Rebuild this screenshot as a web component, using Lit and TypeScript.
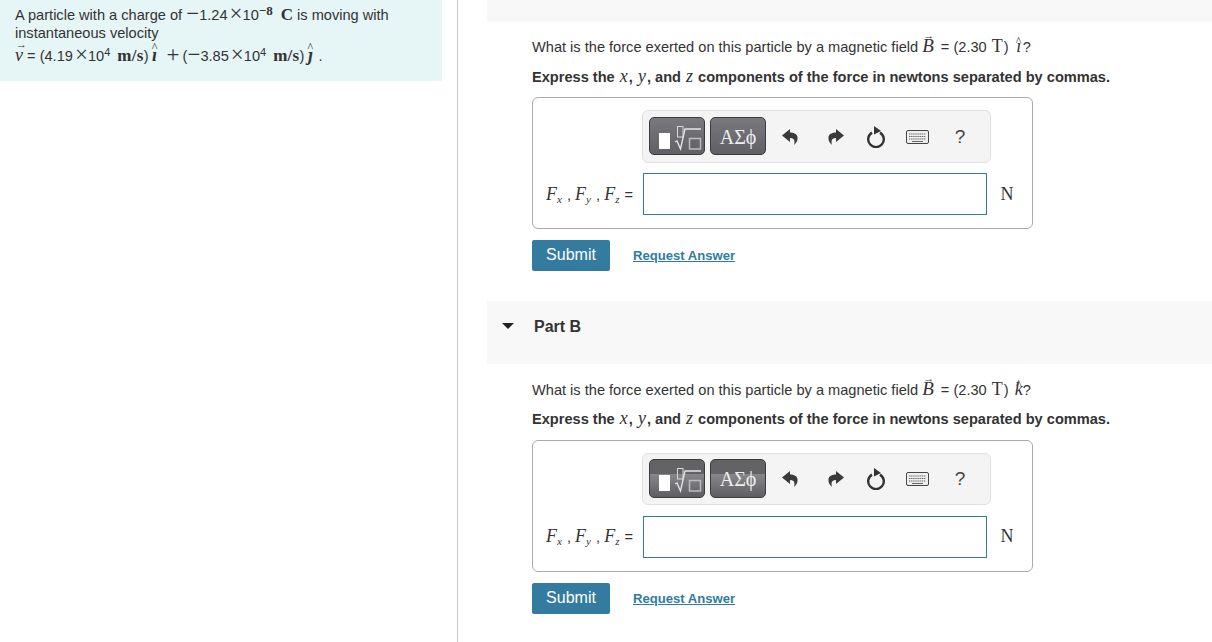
import { LitElement, html, css, nothing } from 'lit';
import { customElement, property } from 'lit/decorators.js';

const mathStyles = css`
    .m{
        font-family: "Liberation Serif", "Times New Roman", serif;
        font-size: 18px;
    }
    .op{
        font-family: "Liberation Serif", "Times New Roman", serif;
        font-size: 23px;
        line-height: 0;
        vertical-align: -1px;
    }
    .times{
        margin-left: 2px;
    }
    .i{
        font-family: "Liberation Serif", "Times New Roman", serif;
        font-style: italic;
        font-size: 18px;
    }
    .hat, .vec{
        position: relative;
        display: inline-block;
    }
    .hat{
        min-width: 8px;
        margin-left: 2px;
        text-align: center;
    }
    .hat::before{
        content: "^";
        position: absolute;
        left: 0;
        right: 0;
        top: -8px;
        text-align: center;
        font-style: normal;
        font-weight: normal;
        font-size: 12px;
    }
    .vec::before{
        content: "\\2192";
        position: absolute;
        left: 1px;
        right: 0;
        top: -11px;
        text-align: center;
        font-style: normal;
        font-size: 11px;
    }
    sub{
        font-size: 11px;
        line-height: 0;
        vertical-align: -3px;
    }
    sup{
        font-size: 11px;
        line-height: 0;
        vertical-align: 5px;
    }
`;

@customElement('answer-toolbar')
export class AnswerToolbar extends LitElement {
    @property({ type: Boolean }) banded = false;

    static styles = css`
        :host{
            display: flex;
            align-items: center;
            box-sizing: border-box;
            width: 349px;
            height: 53px;
            padding: 0 0 1px 6px;
            background: #f4f4f4;
            border: 1px solid #e0e0e0;
            border-radius: 6px;
        }
        :host([banded]){
            height: 52px;
            padding-bottom: 2px;
        }
        .btn{
            display: flex;
            align-items: center;
            justify-content: center;
            box-sizing: border-box;
            width: 56px;
            height: 38px;
            border: 1px solid #3c3c3c;
            border-radius: 5px;
            background: linear-gradient(#79797e, #606064);
            color: #eeeeee;
            font-family: "Liberation Serif", serif;
            font-size: 20px;
            padding: 2px 0 0;
        }
        .btn.math{
            padding: 0;
        }
        .btn + .btn{
            margin-left: 5px;
        }
        :host([banded]) .btn{
            height: 39px;
            background: linear-gradient(#636366 0, #636366 38%, #87878b 39%, #5e5e62 100%);
        }
        .tools{
            display: grid;
            grid-template-columns: 48px 44px 36px 46px 40px;
            justify-items: center;
            align-items: center;
            margin-top: 2px;
        }
        .help{
            font-family: "Liberation Sans", Arial, sans-serif;
            font-size: 19px;
            color: #444444;
        }
        svg{
            display: block;
        }
    `;

    render() {
        return html`
            <button class="btn math">
                <svg width="50" height="30" viewBox="0 0 50 30">
                    <rect x="7" y="12" width="11" height="16" fill="#ffffff"></rect>
                    <rect x="25.5" y="5.5" width="5.5" height="10.5" fill="none" stroke="#d8d8d8"></rect>
                    <path d="M23 21l2-1 3.5 8L33 8h16" fill="none" stroke="#e6e6e6" stroke-width="1.3"></path>
                    <rect x="37.5" y="17.5" width="11" height="10.5" fill="none" stroke="#bdbdbd" stroke-width="1.5"></rect>
                </svg>
            </button>
            <button class="btn">ΑΣϕ</button>
            <div class="tools">
                <svg width="16" height="17" viewBox="0 0 16 17">
                    <path d="M8 0L0 6.5 8 13V9c3 0 4.5 1.5 4.5 3.5 0 1.5-.2 2.5-.5 3.5 2.5-2 4-5 3.5-8C15 5 12 3.5 8 3.5z" fill="#3a3a3a"></path>
                </svg>
                <svg width="18" height="17" viewBox="0 0 16 17" style="transform: scaleX(-1)">
                    <path d="M8 0L0 6.5 8 13V9c3 0 4.5 1.5 4.5 3.5 0 1.5-.2 2.5-.5 3.5 2.5-2 4-5 3.5-8C15 5 12 3.5 8 3.5z" fill="#3a3a3a"></path>
                </svg>
                <svg width="20" height="22" viewBox="0 0 20 22">
                    <path d="M6 6.6a7.8 7.8 0 1 0 8 0" fill="none" stroke="#333333" stroke-width="2.4"></path>
                    <path d="M8 0l7 5-7 3.5z" fill="#333333"></path>
                </svg>
                <svg width="23" height="14" viewBox="0 0 23 14">
                    <rect x="0.5" y="0.5" width="22" height="13" rx="1.5" fill="#eeeeee" stroke="#444444"></rect>
                    <path d="M3 4h17M3 6.5h17M3 9h17" stroke="#666666" stroke-dasharray="1.4 .7" fill="none"></path>
                    <path d="M6 11.5h11" stroke="#666666" fill="none"></path>
                </svg>
                <span class="help">?</span>
            </div>
        `;
    }
}

@customElement('question-part')
export class QuestionPart extends LitElement {
    @property() title = '';
    @property() unit = 'ı';
    @property({ type: Boolean }) banded = false;

    static styles = [mathStyles, css`
        :host{
            display: block;
        }
        .band{
            display: flex;
            align-items: flex-start;
            box-sizing: border-box;
            height: 22px;
            background: #f8f8f8;
        }
        .band.titled{
            height: 63px;
            padding: 16px 0 0 15px;
        }
        .arrow{
            width: 0;
            height: 0;
            margin: 6px 20px 0 0;
            border-left: 6px solid transparent;
            border-right: 6px solid transparent;
            border-top: 6px solid #222222;
        }
        h2{
            margin: 0;
            font-size: 16px;
            line-height: 19px;
            font-weight: bold;
            color: #333333;
        }
        .body{
            padding-left: 45px;
        }
        p{
            margin: 0;
            height: 20px;
            color: #333333;
            font-size: 14.6px;
            line-height: 20px;
            white-space: nowrap;
        }
        .question{
            padding-top: 14px;
        }
        .question .hat::before{
            top: -5px;
        }
        .question .vec{
            margin-right: 3px;
        }
        .question .m{
            margin: 0 1px;
        }
        .express{
            padding-top: 10px;
            font-weight: bold;
        }
        .express .i{
            margin: 0 1px;
            font-weight: normal;
        }
        .banded .question{
            padding-top: 15px;
        }
        .banded .express{
            padding-top: 9px;
        }
        .box{
            display: grid;
            grid-template-columns: 110px 344px 1fr;
            box-sizing: border-box;
            width: 501px;
            height: 132px;
            margin-top: 11px;
            padding-top: 12px;
            border: 1px solid #aaaaaa;
            border-radius: 6px;
            align-content: start;
        }
        .banded .box{
            margin-top: 12px;
        }
        answer-toolbar{
            grid-column: 2 / 4;
            margin-left: -1px;
        }
        .label{
            padding-left: 13px;
            align-self: center;
            color: #333333;
            font-size: 14.6px;
            white-space: nowrap;
        }
        .label .i{
            margin-right: 1px;
        }
        .label sub{
            font-style: italic;
            font-family: "Liberation Serif", serif;
        }
        .field{
            box-sizing: border-box;
            height: 42px;
            margin: 10px 0 0 0;
            border: 1px solid #2f7ca0;
            background: #ffffff;
        }
        .banded .field{
            margin-top: 11px;
        }
        .label, .n{
            margin-top: 10px;
        }
        .n{
            align-self: center;
            text-align: center;
            width: 40px;
            color: #333333;
        }
        .actions{
            display: flex;
            align-items: center;
            margin-top: 11px;
        }
        .submit{
            box-sizing: border-box;
            width: 78px;
            height: 31px;
            border: 0;
            border-radius: 2px;
            background: #337ca0;
            color: #ffffff;
            font-family: "Liberation Sans", Arial, sans-serif;
            font-size: 16px;
            padding: 0 0 1px;
        }
        a{
            margin-left: 23px;
            color: #2f7ca0;
            font-size: 13.1px;
            font-weight: bold;
            text-decoration: underline;
        }
    `];

    render() {
        const titled = this.title !== '';
        return html`
            <div class="band ${titled ? 'titled' : ''}">
                ${titled ? html`<span class="arrow"></span><h2>${this.title}</h2>` : nothing}
            </div>
            <div class="body ${this.banded ? 'banded' : ''}">
                <p class="question">What is the force exerted on this particle by a magnetic field
                    <span class="i vec" style="font-size: 19px">B</span> = (2.30 <span class="m">T</span>)
                    <span class="i hat">${this.unit}</span>?</p>
                <p class="express">Express the <span class="i">x</span>, <span class="i">y</span>, and
                    <span class="i">z</span> components of the force in newtons separated by commas.</p>
                <div class="box">
                    <answer-toolbar ?banded=${this.banded}></answer-toolbar>
                    <div class="label">
                        <span class="i">F<sub>x</sub></span> , <span class="i">F<sub>y</sub></span> ,
                        <span class="i">F<sub>z</sub></span> =
                    </div>
                    <div class="field"></div>
                    <div class="n m">N</div>
                </div>
                <div class="actions">
                    <button class="submit">Submit</button>
                    <a href="#">Request Answer</a>
                </div>
            </div>
        `;
    }
}

@customElement('app-root')
export class AppRoot extends LitElement {
    static styles = [mathStyles, css`
        :host{
            display: grid;
            grid-template-columns: 458px 1fr;
            height: 642px;
            overflow: hidden;
            font-family: "Liberation Sans", Arial, sans-serif;
            background: #ffffff;
        }
        .left{
            border-right: 1px solid #cccccc;
        }
        .intro{
            box-sizing: border-box;
            width: 442px;
            height: 81px;
            padding: 6px 15px 0;
            background: #e6f5f6;
            color: #333333;
            font-size: 14.6px;
            line-height: 18px;
            white-space: nowrap;
        }
        .velocity{
            margin-top: 4px;
        }
        .strong{
            font-weight: bold;
        }
        .units{
            margin-left: 7px;
            font-size: 17px;
            font-weight: bold;
            letter-spacing: .3px;
        }
        .plus{
            margin: 0 3px 0 8px;
        }
        .right{
            padding-left: 29px;
        }
        question-part + question-part{
            margin-top: 30px;
        }
        .exp{
            font-family: "Liberation Serif", serif;
            font-size: 13px;
            font-weight: bold;
        }
        .charge{
            margin-left: 8px;
            font-size: 17px;
            font-weight: bold;
        }
    `];

    render() {
        return html`
            <div class="left">
                <div class="intro">
                    <div>A particle with a charge of <span class="op">−</span>1.24<span class="op times">×</span>10<sup class="exp">−8</sup><span class="m charge">C</span> is moving with</div>
                    <div>instantaneous velocity</div>
                    <div class="velocity"><span class="i vec">v</span> = (4.19<span class="op times">×</span>10<sup>4</sup><span class="m units">m/s</span>)<span class="i hat strong">ı</span><span class="op plus">+</span>(<span class="op">−</span>3.85<span class="op times">×</span>10<sup>4</sup><span class="m units">m/s</span>)<span class="i hat strong">ȷ</span> .</div>
                </div>
            </div>
            <div class="right">
                <question-part unit="ı"></question-part>
                <question-part title="Part B" unit="k" banded></question-part>
            </div>
        `;
    }
}
